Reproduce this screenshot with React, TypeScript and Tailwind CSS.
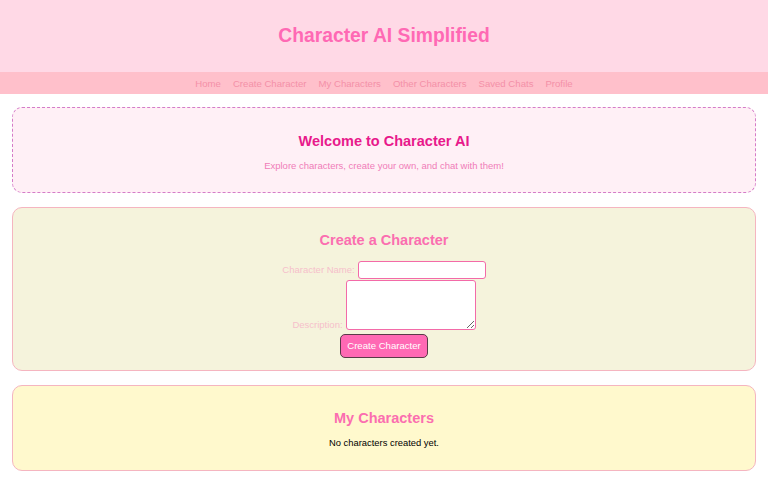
export default function App() {
  const links = ["Home", "Create Character", "My Characters", "Other Characters", "Saved Chats", "Profile"];

  return (
    <div className="min-h-[480px] bg-white font-['Liberation_Sans',Arial,sans-serif]">
      {/* Header */}
      <header className="flex h-[72px] items-center justify-center bg-[#ffd9e6]">
        <h1 className="text-[19.3px] font-bold text-[#ff69b4]">Character AI Simplified</h1>
      </header>

      {/* Nav */}
      <nav className="flex h-[22px] items-center justify-center gap-[12px] bg-[#ffc0cb] pt-[1px] text-[9.6px] text-[#f490a8]">
        {links.map((l) => (
          <a key={l} href="#" className="leading-none">
            {l}
          </a>
        ))}
      </nav>

      <main className="flex flex-col px-[12px] pt-[13px]">
        {/* Welcome */}
        <section className="flex h-[86px] flex-col items-center justify-center rounded-[10px] border border-dashed border-[#d57cc8] bg-[#fff0f6] pt-[4px]">
          <h2 className="text-[14.5px] font-bold text-[#e8198b]">Welcome to Character AI</h2>
          <p className="mt-[7px] text-[9.5px] text-[#f07cb8]">
            Explore characters, create your own, and chat with them!
          </p>
        </section>

        {/* Create */}
        <section className="mt-[14px] flex h-[164px] flex-col items-center rounded-[10px] border border-[#f5b5c0] bg-[#f5f3dc] pt-[22px] text-center">
          <h2 className="text-[14.5px] font-bold text-[#fb6eb0]">Create a Character</h2>
          <form className="mt-[9px] text-[9.5px] text-[#f5bfcb]">
            <div className="flex items-center justify-center">
              <label className="mr-[3px]">Character Name:</label>
              <input className="h-[18px] w-[128px] rounded-[3px] border-[1.5px] border-[#f36aa8] bg-white" />
            </div>
            <div className="flex items-end justify-center">
              <label className="mr-[3px] leading-none">Description:</label>
              <textarea className="mt-[1px] h-[50px] w-[130px] resize rounded-[3px] border-[1.5px] border-[#f36aa8] bg-white" />
            </div>
            <button
              type="button"
              className="mt-[4px] h-[24px] w-[88px] rounded-[5px] border border-[#5a3a48] bg-[#ff69b4] text-[9.6px] text-white"
            >
              Create Character
            </button>
          </form>
        </section>

        {/* My characters */}
        <section className="mt-[14px] flex h-[86px] flex-col items-center justify-center rounded-[10px] border border-[#f5b5c0] bg-[#fff9cd] pt-[2px]">
          <h2 className="text-[14.5px] font-bold text-[#fb6eb0]">My Characters</h2>
          <p className="mt-[7px] text-[9.4px] text-black">No characters created yet.</p>
        </section>
      </main>
    </div>
  );
}
